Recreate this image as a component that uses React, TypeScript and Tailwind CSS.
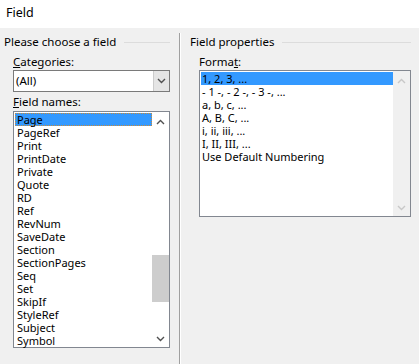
const fieldNames = [
  'Page', 'PageRef', 'Print', 'PrintDate', 'Private', 'Quote', 'RD', 'Ref', 'RevNum',
  'SaveDate', 'Section', 'SectionPages', 'Seq', 'Set', 'SkipIf', 'StyleRef', 'Subject', 'Symbol',
];

const formats = [
  '1, 2, 3, ...', '- 1 -, - 2 -, - 3 -, ...', 'a, b, c, ...', 'A, B, C, ...',
  'i, ii, iii, ...', 'I, II, III, ...', 'Use Default Numbering',
];

const Chevron = ({ up = false, color = '#505050' }: { up?: boolean; color?: string }) => (
  <svg width="9" height="6" viewBox="0 0 9 6" fill="none">
    <path
      d={up ? 'M1 5L4.5 1.5L8 5' : 'M1 1L4.5 4.5L8 1'}
      stroke={color}
      strokeWidth="1.4"
    />
  </svg>
);

const GroupHeader = ({ label }: { label: string }) => (
  <div className="flex items-center h-[20px] gap-2">
    <span className="text-[11.5px] text-black whitespace-nowrap">{label}</span>
    <div className="flex-1 h-px bg-[#dcdcdc]" />
  </div>
);

const App = () => {
  return (
    <div className="w-[419px] h-[364px] overflow-hidden flex flex-col bg-[#f0f0f0]" style={{ fontFamily: '"Noto Sans", sans-serif' }}>
      <div className="h-[28px] bg-white flex items-center pl-[6px] pb-[1px] text-[12.5px] text-black">Field</div>

      <div className="flex flex-1">
        {/* left */}
        <div className="w-[179px] pl-[4px] pr-[9px] pt-[4px]">
          <GroupHeader label="Please choose a field" />
          <div className="pl-[9px]">
            <div className="h-[17px] mt-[1px] flex items-center text-[11.5px]">
              <span><u>C</u>ategories:</span>
            </div>
            <div className="h-[22px] flex bg-white border border-[#7a7a7a]">
              <div className="flex-1 flex items-center pl-[2px] text-[11.5px]">(All)</div>
              <div className="w-[16px] bg-[#e5e5e5] border-l border-[#cccccc] flex items-center justify-center">
                <Chevron />
              </div>
            </div>
            <div className="h-[19px] flex items-center text-[11.5px]">
              <span><u>F</u>ield names:</span>
            </div>
            <div className="h-[237px] flex bg-white border border-[#828790]">
              <div className="flex-1 pt-[1px] pl-[1px]">
                {fieldNames.map((n, i) => (
                  <div
                    key={n}
                    className={`h-[13px] leading-[13px] text-[11px] pl-[2px] whitespace-nowrap ${i === 0 ? 'bg-[#3399ff] outline outline-1 outline-dotted outline-[#c88a3a] -outline-offset-1' : ''}`}
                  >
                    {n}
                  </div>
                ))}
              </div>
              <div className="w-[17px] flex flex-col items-center">
                <div className="h-[20px] w-full flex items-center justify-center"><Chevron up /></div>
                <div className="flex-1 w-full pt-[123px] pb-[28px]">
                  <div className="h-full w-full bg-[#cdcdcd]" />
                </div>
                <div className="h-[17px] w-full flex items-center justify-center"><Chevron /></div>
              </div>
            </div>
          </div>
        </div>

        {/* separator */}
        <div className="w-[2px] mt-[5px] flex">
          <div className="w-px bg-[#a0a0a0]" />
          <div className="w-px bg-white" />
        </div>

        {/* right */}
        <div className="flex-1 pl-[9px] pr-[8px] pt-[4px]">
          <GroupHeader label="Field properties" />
          <div className="pl-[9px]">
            <div className="h-[17px] mt-[1px] flex items-center text-[11.5px]">
              <span>Forma<u>t</u>:</span>
            </div>
            <div className="h-[147px] flex bg-white border border-[#828790]">
              <div className="flex-1 pt-[1px] pl-[1px]">
                {formats.map((f, i) => (
                  <div
                    key={f}
                    className={`h-[13px] leading-[13px] text-[11px] pl-[1px] whitespace-nowrap ${i === 0 ? 'bg-[#3399ff]' : ''}`}
                  >
                    {f}
                  </div>
                ))}
              </div>
              <div className="w-[17px] bg-[#f0f0f0] flex flex-col items-center justify-between">
                <div className="h-[20px] flex items-center justify-center"><Chevron up color="#c8c8c8" /></div>
                <div className="h-[17px] flex items-center justify-center"><Chevron color="#c8c8c8" /></div>
              </div>
            </div>
          </div>
        </div>
      </div>
    </div>
  );
};

export default App;
